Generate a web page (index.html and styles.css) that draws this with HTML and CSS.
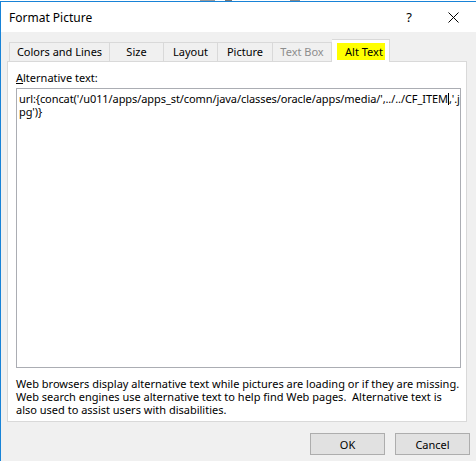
FILE: index.html
```html
<!DOCTYPE html>
<html lang="en">

<head>
    <meta charset="UTF-8">
    <meta name="viewport" content="width=device-width, initial-scale=1.0">
    <title>Format Picture</title>
    <link rel="stylesheet" href="styles.css">
</head>

<body>
    <div class="behind"></div>
    <div class="window">
        <div class="titlebar">
            <span class="title">Format Picture</span>
            <span class="help">?</span>
            <span class="close">
                <svg width="11" height="11" viewBox="0 0 11 11">
                    <path d="M0.5 0.5 L10.5 10.5 M10.5 0.5 L0.5 10.5" stroke="#000" stroke-width="1" fill="none" />
                </svg>
            </span>
        </div>

        <div class="content">
            <div class="tabs">
                <div class="tab tab-first">Colors and Lines</div>
                <div class="tab tab-size">Size</div>
                <div class="tab tab-layout">Layout</div>
                <div class="tab tab-picture">Picture</div>
                <div class="tab tab-textbox disabled">Text Box</div>
                <div class="tab tab-alt active"><span class="highlight">Alt Text</span></div>
            </div>

            <div class="panel">
                <div class="label"><u>A</u>lternative text:</div>
                <div class="textbox">
                    <div class="line">url:{concat('/u011/apps/apps_st/comn/java/classes/oracle/apps/media/',../../CF_ITEM<span class="caret"></span>,'.j</div>
                    <div class="line">pg')}</div>
                </div>
                <div class="note">
                    Web browsers display alternative text while pictures are loading or if they are missing.<br>
                    Web search engines use alternative text to help find Web pages.&nbsp; Alternative text is<br>
                    also used to assist users with disabilities.
                </div>
            </div>

            <div class="buttons">
                <button type="button">OK</button>
                <button type="button">Cancel</button>
            </div>
        </div>
    </div>
</body>

</html>
```

FILE: styles.css
```css
body {
    margin: 0;
    font-family: "Noto Sans", sans-serif;
    font-size: 11px;
    color: #000;
    background-color: #f0f0f0;
    width: 476px;
    height: 461px;
    overflow: hidden;
}

.behind {
    height: 1px;
    background: linear-gradient(to right, #fff 0, #fff 200px, #9a9a9a 200px, #9a9a9a 215px, #fff 215px, #fff 225px, #777 225px, #777 232px, #fff 232px, #fff 290px, #888 290px, #888 300px, #fff 300px);
}

.window {
    border-top: 1px solid #1883d7;
    border-left: 1px solid #1883d7;
    height: 459px;
    background-color: #f0f0f0;
}

.titlebar {
    height: 30px;
    background-color: #fff;
    display: flex;
    align-items: center;
}

.title {
    padding-left: 8px;
    flex: 1;
    font-size: 12px;
}

.help {
    font-size: 13px;
    margin-right: 36px;
}

.close {
    display: flex;
    margin-right: 17px;
}

.content {
    padding: 7px 0 0 6px;
}

.tabs {
    display: flex;
    align-items: flex-end;
    height: 22px;
    padding-left: 2px;
}

.tab {
    box-sizing: border-box;
    height: 19px;
    line-height: 17px;
    text-align: center;
    border: 1px solid #d9d9d9;
    border-left: none;
    border-bottom: none;
    background-color: #f0f0f0;
}

.tab-first {
    width: 101px;
    border-left: 1px solid #d9d9d9;
}

.tab-size {
    width: 54px;
}

.tab-layout {
    width: 54px;
}

.tab-picture {
    width: 55px;
}

.tab-textbox {
    width: 59px;
}

.disabled {
    color: #8d8d8d;
}

.tab.active {
    width: 58px;
    height: 23px;
    margin-bottom: -1px;
    background-color: #fff;
    line-height: 21px;
    padding-top: 1px;
}

.highlight {
    background-color: #ffff00;
    padding: 2px 2px 2px 8px;
    margin-left: 1px;
    display: inline-block;
    line-height: 13px;
}

.panel {
    box-sizing: border-box;
    width: 460px;
    height: 361px;
    background-color: #fff;
    border: 1px solid #d9d9d9;
    padding: 8px 0 0 8px;
}

.label {
    line-height: 16px;
    margin-bottom: 2px;
}

.textbox {
    box-sizing: border-box;
    width: 445px;
    height: 280px;
    border: 1px solid #abadb3;
    padding: 3px 0 0 2px;
    white-space: nowrap;
    overflow: hidden;
    letter-spacing: -0.08px;
}

.line {
    line-height: 13px;
}

.caret {
    display: inline-block;
    width: 1px;
    height: 12px;
    background-color: #000;
    vertical-align: -2px;
}

.note {
    margin-top: 9px;
    line-height: 13px;
    white-space: nowrap;
}

.buttons {
    display: flex;
    justify-content: flex-end;
    gap: 10px;
    padding: 11px 6px 0 0;
}

button {
    box-sizing: border-box;
    width: 75px;
    height: 22px;
    font-family: "Noto Sans", sans-serif;
    font-size: 11px;
    background-color: #e1e1e1;
    border: 1px solid #adadad;
    padding: 0;
    color: #000;
}
```
